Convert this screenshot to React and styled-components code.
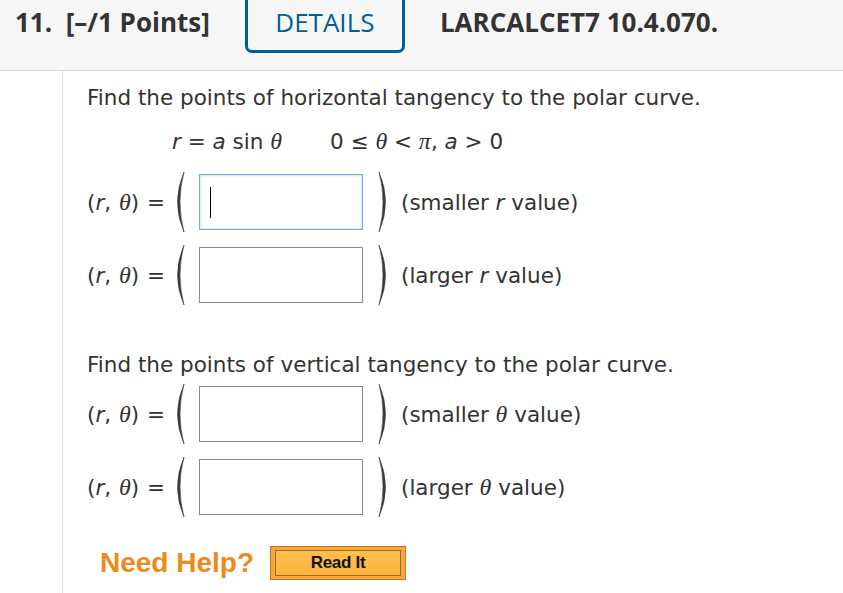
import React from 'react';
import styled, { createGlobalStyle } from 'styled-components';

const GlobalStyle = createGlobalStyle`
  html, body {
    margin: 0;
    padding: 0;
    background: #fff;
  }
  body {
    font-family: 'DejaVu Sans', Verdana, sans-serif;
    color: #333;
  }
`;

const Page = styled.div`
  width: 843px;
  height: 593px;
  overflow: hidden;
  display: flex;
  flex-direction: column;
`;

const Header = styled.header`
  height: 70px;
  flex-shrink: 0;
  background: #f6f6f6;
  border-bottom: 1px solid #dcdcdc;
  display: flex;
  align-items: flex-start;
  font-family: 'Open Sans', sans-serif;
`;

const QuestionTitle = styled.h2`
  margin: 0;
  padding: 4px 0 0 15px;
  font-size: 26px;
  line-height: 36px;
  font-weight: 700;
  color: #333;
  white-space: pre;
`;

const DetailsTab = styled.div`
  margin-left: 35px;
  width: 160px;
  height: 53px;
  box-sizing: border-box;
  border: 3px solid #005e9c;
  border-top: none;
  border-radius: 0 0 7px 7px;
  display: flex;
  align-items: flex-start;
  justify-content: center;
  padding-top: 4px;
  color: #005e9c;
  font-size: 26px;
  line-height: 36px;
`;

const ProblemCode = styled.h2`
  margin: 0 0 0 35px;
  padding-top: 4px;
  font-size: 26px;
  line-height: 36px;
  font-weight: 700;
  color: #333;
`;

const Body = styled.main`
  flex: 1;
  margin-left: 62px;
  border-left: 1px solid #dcdcdc;
  padding-left: 24px;
  font-size: 21.5px;
`;

const Prompt = styled.p`
  margin: ${p => p.$top}px 0 0;
  line-height: 24px;
  white-space: nowrap;
`;

const Formula = styled.div`
  margin: 19px 0 0 85px;
  line-height: 24px;
  display: flex;
  gap: 48px;
  white-space: pre;
`;

const Var = styled.i`
  font-style: italic;
`;

const Greek = styled.i`
  font-family: 'Liberation Serif', 'DejaVu Serif', serif;
  font-style: italic;
  font-size: 24px;
`;

const Row = styled.div`
  margin-top: ${p => p.$top}px;
  height: 62px;
  display: flex;
  align-items: center;
`;

const Lhs = styled.span`
  min-width: 82px;
  margin-right: 4px;
  word-spacing: 1px;
  white-space: pre;
`;

const ParenSvg = styled.svg`
  width: 14px;
  height: 62px;
  flex-shrink: 0;
  margin: ${p => (p.$right ? '0 11px 0 13px' : '0 12px 0 0')};
`;

const AnswerBox = styled.div`
  width: 164px;
  height: 56px;
  box-sizing: border-box;
  border: 1px solid ${p => (p.$focused ? '#7aa5d8' : '#8a8a8a')};
  box-shadow: ${p => (p.$focused ? 'inset 0 0 3px 1px #d6e6f7' : 'none')};
  background: #fff;
  position: relative;
`;

const Caret = styled.span`
  position: absolute;
  left: 10px;
  top: 12px;
  width: 1px;
  height: 31px;
  background: #000;
`;

const Hint = styled.span`
  white-space: pre;
`;

const HelpRow = styled.div`
  margin: 28px 0 0 13px;
  display: flex;
  align-items: center;
  font-family: 'Liberation Sans', Arial, sans-serif;
`;

const NeedHelp = styled.span`
  font-size: 28px;
  font-weight: 700;
  color: #ec8a1b;
`;

const ReadButton = styled.button`
  margin-left: 16px;
  width: 136px;
  height: 34px;
  padding: 3px 4px;
  box-sizing: border-box;
  border: 1px solid #c8741c;
  background: #f7a53c;
  display: flex;
  cursor: pointer;
`;

const ReadInner = styled.span`
  flex: 1;
  border: 1px solid #9b6b2c;
  background: linear-gradient(#fec04c, #fcb540);
  font-family: 'Liberation Sans', Arial, sans-serif;
  font-size: 17px;
  font-weight: 700;
  letter-spacing: -0.3px;
  color: #111;
  display: flex;
  align-items: center;
  justify-content: center;
`;

const Paren = ({ right }) => (
  <ParenSvg $right={right} viewBox="0 0 14 62">
    {right ? (
      <path d="M3 1 Q16 31 3 61 Q11 31 3 1 Z" fill="#3a3a3a" stroke="#3a3a3a" strokeWidth="0.6" />
    ) : (
      <path d="M11 1 Q-2 31 11 61 Q3 31 11 1 Z" fill="#3a3a3a" stroke="#3a3a3a" strokeWidth="0.6" />
    )}
  </ParenSvg>
);

const Answer = ({ top, focused, children }) => (
  <Row $top={top}>
    <Lhs>
      (<Var>r</Var>, <Greek>θ</Greek>) =
    </Lhs>
    <Paren />
    <AnswerBox $focused={focused}>{focused && <Caret />}</AnswerBox>
    <Paren right />
    <Hint>{children}</Hint>
  </Row>
);

export default function App() {
  return (
    <Page>
      <GlobalStyle />
      <Header>
        <QuestionTitle>11.  [–/1 Points]</QuestionTitle>
        <DetailsTab>DETAILS</DetailsTab>
        <ProblemCode>LARCALCET7 10.4.070.</ProblemCode>
      </Header>
      <Body>
        <Prompt $top={15}>Find the points of horizontal tangency to the polar curve.</Prompt>
        <Formula>
          <span>
            <Var>r</Var> = <Var>a</Var> sin <Greek>θ</Greek>
          </span>
          <span>
            0 ≤ <Greek>θ</Greek> &lt; <Greek>π</Greek>, <Var>a</Var> &gt; 0
          </span>
        </Formula>
        <Answer top={17} focused>
          (smaller <Var>r</Var> value)
        </Answer>
        <Answer top={11}>
          (larger <Var>r</Var> value)
        </Answer>
        <Prompt $top={47}>Find the points of vertical tangency to the polar curve.</Prompt>
        <Answer top={6}>
          (smaller <Greek>θ</Greek> value)
        </Answer>
        <Answer top={11}>
          (larger <Greek>θ</Greek> value)
        </Answer>
        <HelpRow>
          <NeedHelp>Need Help?</NeedHelp>
          <ReadButton>
            <ReadInner>Read It</ReadInner>
          </ReadButton>
        </HelpRow>
      </Body>
    </Page>
  );
}
